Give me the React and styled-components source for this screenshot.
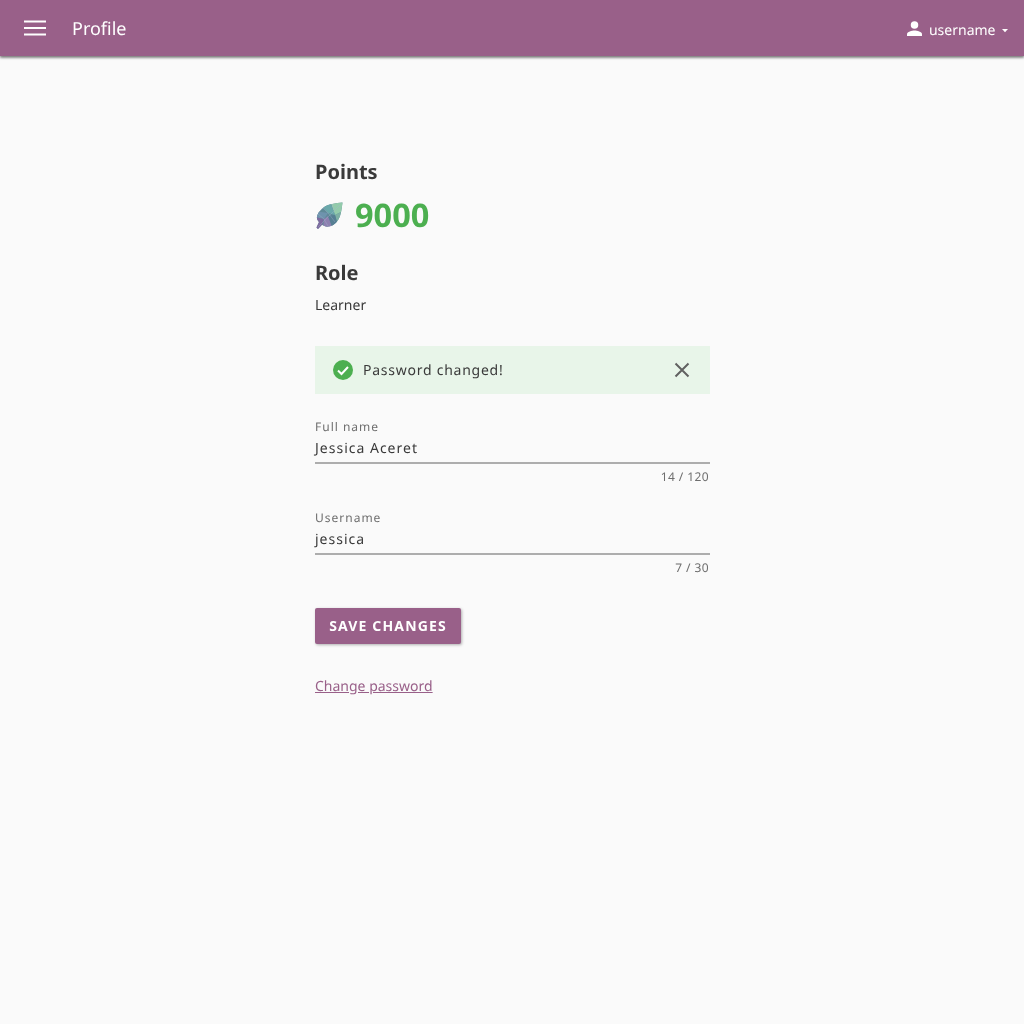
import React from 'react';
import styled, { createGlobalStyle } from 'styled-components';

const GlobalStyle = createGlobalStyle`
	html, body {
		margin: 0;
		padding: 0;
		background: #fafafa;
		font-family: 'Noto Sans', sans-serif;
		color: #3a3a3a;
		text-rendering: geometricPrecision;
	}
`;
const Page = styled.div`
	min-height: 1024px;
	background: #fafafa;
	will-change: transform;
`;
const AppBar = styled.header`
	display: flex;
	align-items: center;
	justify-content: space-between;
	height: 56px;
	padding: 0 16px 0 24px;
	background: #996089;
	color: #fff;
	box-shadow: 0 1px 3px rgba(0, 0, 0, 0.5), 0 2px 2px rgba(0, 0, 0, 0.2);
`;
const BarLeft = styled.div`
	display: flex;
	align-items: center;
	gap: 26px;
`;
const MenuIcon = styled.svg`
	display: block;
	width: 22px;
	height: 16px;
	margin-top: -1px;
`;
const BarTitle = styled.span`
	margin-top: 1px;
	font-size: 18px;
	line-height: 24px;
`;
const UserMenu = styled.div`
	display: flex;
	align-items: center;
	margin-top: 6px;
	font-size: 14px;
	line-height: 20px;
`;
const UserIcon = styled.svg`
	display: block;
	margin-top: -6px;
`;
const UserName = styled.span`
	margin: 0 6.5px 0 7px;
`;
const Content = styled.div`
	padding-left: 1px;
`;
const Main = styled.main`
	width: 395px;
	margin: 0 auto;
	padding-top: 101px;
`;
const Heading = styled.h2`
	margin: 0;
	font-size: 20px;
	line-height: 30px;
	font-weight: 700;
	color: #3a3a3a;
`;
const PointsRow = styled.div`
	display: flex;
	align-items: center;
	height: 48px;
	margin: 4px 0 19px 0;
`;
const PointsValue = styled.span`
	margin-left: 12px;
	font-size: 32.5px;
	line-height: 46px;
	font-weight: 700;
	color: #4caf50;
`;
const RoleText = styled.p`
	margin: 7px 0 0 0;
	font-size: 14px;
	line-height: 21px;
`;
const Banner = styled.div`
	display: flex;
	align-items: center;
	height: 48px;
	margin-top: 30px;
	padding: 0 18px 0 18px;
	background: #e8f5e9;
	font-size: 14px;
	letter-spacing: 0.75px;
`;
const BannerText = styled.span`
	flex: 1;
	margin-left: 10px;
`;
const Field = styled.div`
	margin-top: 25px;
`;
const FieldLabel = styled.label`
	display: block;
	font-size: 12px;
	line-height: 16px;
	letter-spacing: 1px;
	color: #6e6e6e;
`;
const FieldValue = styled.div`
	height: 29px;
	padding-top: 3px;
	box-sizing: border-box;
	font-size: 14px;
	line-height: 21px;
	letter-spacing: 1px;
	border-bottom: 2px solid #adadad;
`;
const FieldCount = styled.div`
	margin-top: 5px;
	padding-right: 1px;
	text-align: right;
	font-size: 12px;
	line-height: 16px;
	letter-spacing: 0.4px;
	color: #6e6e6e;
`;
const SaveButton = styled.button`
	display: block;
	width: 146px;
	height: 36px;
	margin-top: 32px;
	padding: 0 0 2px 0;
	border: 0;
	border-radius: 2px;
	background: #996089;
	color: #fff;
	font-family: inherit;
	font-size: 14px;
	font-weight: 700;
	letter-spacing: 1.15px;
	box-shadow: 1px 1px 3px rgba(0, 0, 0, 0.3);
`;
const PasswordLink = styled.a`
	display: inline-block;
	margin-top: 32px;
	font-size: 14px;
	line-height: 21px;
	color: #996089;
	text-decoration: underline;
`;

const Leaf = () => (
	<svg width="28" height="28" viewBox="0 0 28 28">
		<defs>
			<clipPath id="leaf">
				<path d="M27.500 1.500C21 2 13 3 8.500 6.500C4 10 1.500 14 2 17.500C2.200 18.800 3 20 4 21L1.500 26.500L3 28L7 23.800C9 25.200 11 26 14 25.500C19.500 24.600 23.500 20 25.300 14C26.600 9.500 27 5 27.500 1.500Z" />
			</clipPath>
		</defs>
		<g clipPath="url(#leaf)">
			<rect width="28" height="28" fill="#5f8a98" />
			<polygon points="15,0 28,0 28,10 20,14" fill="#93cbab" />
			<polygon points="6,4 15,0 20,14 13,12" fill="#6aa8aa" />
			<polygon points="28,10 20,14 24,28 28,28" fill="#7db0a4" />
			<polygon points="0,10 13,12 9,18 0,16" fill="#6e93ad" />
			<polygon points="0,16 9,18 6,28 0,28" fill="#7d6a9f" />
			<polygon points="9,18 13,15 18,28 8,28" fill="#8d80b0" />
			<polygon points="13,15 20,14 24,28 18,28" fill="#567f93" />
			<path d="M3 26L25 4M9 18L3 13M14 13L8 7M19 9L17 3M9 18L13 25M14 13L20 21" stroke="#a9b4cf" strokeOpacity="0.6" strokeWidth="0.6" fill="none" />
		</g>
	</svg>
);

export default function App() {
	return (
		<Page>
			<GlobalStyle />
			<AppBar>
				<BarLeft>
					<MenuIcon viewBox="0 0 22 16">
						<path d="M0 1.500h22M0 8h22M0 14.500h22" stroke="#fff" strokeWidth="2" />
					</MenuIcon>
					<BarTitle>Profile</BarTitle>
				</BarLeft>
				<UserMenu>
					<UserIcon width="15" height="15" viewBox="0 0 16 16">
						<circle cx="8" cy="4.200" r="4" fill="#fff" />
						<path d="M0 16v-2c0-2.700 5.300-4 8-4s8 1.300 8 4v2z" fill="#fff" />
					</UserIcon>
					<UserName>username</UserName>
					<svg width="6" height="4" viewBox="0 0 6 4">
						<path d="M0 0h6L3 3.200z" fill="#fff" />
					</svg>
				</UserMenu>
			</AppBar>
			<Content>
				<Main>
					<Heading>Points</Heading>
					<PointsRow>
						<Leaf />
						<PointsValue>9000</PointsValue>
					</PointsRow>
					<Heading>Role</Heading>
					<RoleText>Learner</RoleText>
					<Banner>
						<svg width="20" height="20" viewBox="0 0 20 20">
							<circle cx="10" cy="10" r="10" fill="#4caf50" />
							<path d="M5 10.500l3.500 3.500L15 7" fill="none" stroke="#fff" strokeWidth="2" />
						</svg>
						<BannerText>Password changed!</BannerText>
						<svg width="20" height="20" viewBox="0 0 20 20">
							<path d="M3.500 3.500l13 13M16.500 3.500l-13 13" stroke="#616161" strokeWidth="2" />
						</svg>
					</Banner>
					<Field>
						<FieldLabel>Full name</FieldLabel>
						<FieldValue>Jessica Aceret</FieldValue>
						<FieldCount>14 / 120</FieldCount>
					</Field>
					<Field>
						<FieldLabel>Username</FieldLabel>
						<FieldValue>jessica</FieldValue>
						<FieldCount>7 / 30</FieldCount>
					</Field>
					<SaveButton>SAVE CHANGES</SaveButton>
					<PasswordLink href="#">Change password</PasswordLink>
				</Main>
			</Content>
		</Page>
	);
}
